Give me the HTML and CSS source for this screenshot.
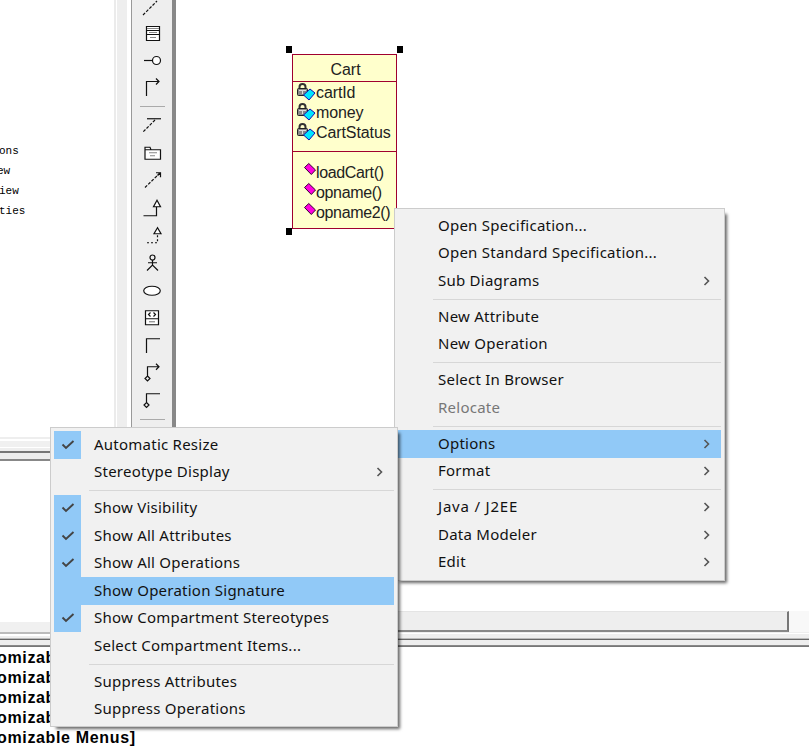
FILE: index.html
```html
<!DOCTYPE html>
<html lang="en">
<head>
    <meta charset="UTF-8">
    <meta name="viewport" content="width=device-width, initial-scale=1.0">
    <title>Class Diagram</title>
    <link rel="stylesheet" href="styles.css">
</head>
<body>
    <div class="workspace">
        <div class="left">
            <div class="tree">
                <div class="tree-item">ons</div>
                <div class="tree-item tree-item-view">ew</div>
                <div class="tree-item">iew</div>
                <div class="tree-item">ties</div>
            </div>
            <div class="splitter"></div>
            <div class="doc"></div>
            <div class="doc-edge"></div>
        </div>
        <div class="toolbar">
            <svg class="tool tool-small" viewBox="0 0 22 27"><path class="dash" d="M1 22L15 8"/></svg>
            <svg class="tool tool-small" viewBox="0 0 22 27"><path fill="#fff" d="M4.5 6.5h13v14h-13z"/><path d="M4 10.5h14M4 14.5h14"/><path class="soft" d="M5 8.500h12M7 12.500h8M8 17.500h6"/></svg>
            <svg class="tool tool-small" viewBox="0 0 22 27"><path d="M2 13.5h9"/><circle cx="14.5" cy="13.5" r="4" fill="#fff"/></svg>
            <svg class="tool tool-small" viewBox="0 0 22 27"><path d="M4.5 22V7.500H17M14 4.500l3 3-3 3"/></svg>
            <div class="tool-sep"></div>
            <svg class="tool" viewBox="0 0 22 27.500"><path d="M5 7.750h14"/><path class="dash" d="M13 9L1 21"/></svg>
            <svg class="tool" viewBox="0 0 22 27.500"><path fill="#fff" d="M3 20.250v-12h5l1 2.500h9.500v9.500zM3 10.750h6"/><path class="soft" d="M7 13.750h8M8 16.750h5"/></svg>
            <svg class="tool" viewBox="0 0 22 27.500"><path class="dash" d="M3 21.500L17 8"/><path d="M14 6.750h4.500v4.500M15.500 9.500l3-3"/></svg>
            <svg class="tool" viewBox="0 0 22 27.500"><path d="M1.500 21.750h13v-9"/><path fill="#fff" d="M15 6.250l-3.500 6.500h7z"/></svg>
            <svg class="tool" viewBox="0 0 22 27.500"><path class="dots" d="M5 21.750h10.500v-8"/><path fill="#fff" d="M15.500 6.750l-3.500 6h7z"/></svg>
            <svg class="tool" viewBox="0 0 22 27.500"><circle cx="10.500" cy="8.500" r="2.500"/><path d="M10.500 11v5M6 13.750h9M5 21.500l5.500-5.500 5.500 5.500"/></svg>
            <svg class="tool" viewBox="0 0 22 27.500"><ellipse cx="10" cy="14.750" rx="8.300" ry="4.500" fill="#fff"/></svg>
            <svg class="tool" viewBox="0 0 22 27.500"><path fill="#fff" d="M3.500 6.750h13v14h-13zM3 14.750h14"/><path d="M8.500 8.500l-2 2 2 2M11.500 8.500l2 2-2 2"/><path class="soft" d="M7 17.750h6"/></svg>
            <svg class="tool" viewBox="0 0 22 27.500"><path d="M4.500 22V7.750H18"/></svg>
            <svg class="tool" viewBox="0 0 22 27.500"><path d="M5.500 17V7.750H17M14 4.750l3 3-3 3M5.500 17l2.500 2.500-2.500 2.500-2.500-2.500z"/></svg>
            <svg class="tool" viewBox="0 0 22 27.500"><path d="M4.500 16.500V7.750H18M4.500 16.500L7 19l-2.500 2.500L2 19z"/></svg>
            <div class="tool-sep"></div>
        </div>
        <div class="diagram">
            <div class="canvas">
                <div class="class-box">
                    <div class="class-name">Cart</div>
                    <div class="attributes">
                        <div class="member"><svg class="icon" viewBox="0 0 20 20"><use href="#lock"/></svg>cartId</div>
                        <div class="member"><svg class="icon" viewBox="0 0 20 20"><use href="#lock"/></svg>money</div>
                        <div class="member"><svg class="icon" viewBox="0 0 20 20"><use href="#lock"/></svg>CartStatus</div>
                    </div>
                    <div class="operations">
                        <div class="member"><svg class="icon" viewBox="0 0 20 20"><use href="#op"/></svg>loadCart()</div>
                        <div class="member"><svg class="icon" viewBox="0 0 20 20"><use href="#op"/></svg>opname()</div>
                        <div class="member"><svg class="icon" viewBox="0 0 20 20"><use href="#op"/></svg>opname2()</div>
                    </div>
                </div>
                <i class="handle handle-tl"></i>
                <i class="handle handle-tr"></i>
                <i class="handle handle-bl"></i>
            </div>
            <div class="scrollbar"><div class="thumb"></div></div>
            <div class="diagram-edge"></div>
        </div>
    </div>
    <div class="frame"></div>
    <div class="log">
        <div>omizable Menus]</div>
        <div>omizable Menus]</div>
        <div>omizable Menus]</div>
        <div>omizable Menus]</div>
        <div>omizable Menus]</div>
    </div>

    <!-- context menu -->
    <div class="menu context-menu">
        <div class="item">Open Specification...</div>
        <div class="item">Open Standard Specification...</div>
        <div class="item">Sub Diagrams<svg class="arrow" viewBox="0 0 8 10"><use href="#arrow"/></svg></div>
        <div class="sep"></div>
        <div class="item">New Attribute</div>
        <div class="item">New Operation</div>
        <div class="sep"></div>
        <div class="item">Select In Browser</div>
        <div class="item disabled">Relocate</div>
        <div class="sep"></div>
        <div class="item active">Options<svg class="arrow" viewBox="0 0 8 10"><use href="#arrow"/></svg></div>
        <div class="item">Format<svg class="arrow" viewBox="0 0 8 10"><use href="#arrow"/></svg></div>
        <div class="sep"></div>
        <div class="item item-wide">Java / J2EE<svg class="arrow" viewBox="0 0 8 10"><use href="#arrow"/></svg></div>
        <div class="item">Data Modeler<svg class="arrow" viewBox="0 0 8 10"><use href="#arrow"/></svg></div>
        <div class="item">Edit<svg class="arrow" viewBox="0 0 8 10"><use href="#arrow"/></svg></div>
    </div>

    <!-- options submenu -->
    <div class="menu sub-menu">
        <div class="item"><span class="check"><svg viewBox="0 0 14 10"><use href="#check"/></svg></span>Automatic Resize</div>
        <div class="item">Stereotype Display<svg class="arrow" viewBox="0 0 8 10"><use href="#arrow"/></svg></div>
        <div class="sep"></div>
        <div class="item"><span class="check"><svg viewBox="0 0 14 10"><use href="#check"/></svg></span>Show Visibility</div>
        <div class="item"><span class="check"><svg viewBox="0 0 14 10"><use href="#check"/></svg></span>Show All Attributes</div>
        <div class="item"><span class="check"><svg viewBox="0 0 14 10"><use href="#check"/></svg></span>Show All Operations</div>
        <div class="item active">Show Operation Signature</div>
        <div class="item"><span class="check"><svg viewBox="0 0 14 10"><use href="#check"/></svg></span>Show Compartment Stereotypes</div>
        <div class="item">Select Compartment Items...</div>
        <div class="sep"></div>
        <div class="item">Suppress Attributes</div>
        <div class="item">Suppress Operations</div>
    </div>

    <svg class="defs">
        <defs>
            <g id="lock">
                <path d="M3.500 6V4q0-3 3-3t3 3v2" fill="none" stroke="#333" stroke-width="2"/>
                <rect x="1.500" y="5.500" width="10" height="7" rx="1" fill="#888" stroke="#222"/>
                <path d="M3 7.500h7M6.500 8v3" stroke="#ddd"/>
                <path d="M7.500 12L14 6l5 4-6 7z" fill="#00e5ff" stroke="#1010b0"/>
            </g>
            <g id="op">
                <path d="M8.500 4.500l4.300-4 6.700 6.500-4.200 4.500z" fill="#f0d" stroke="#303"/>
            </g>
            <path id="arrow" d="M1.500 1l4 4-4 4" fill="none" stroke="#555" stroke-width="1.600"/>
            <path id="check" d="M1.500 4.500l3.500 3.500 7.500-7" fill="none" stroke="#444" stroke-width="1.900"/>
        </defs>
    </svg>
</body>
</html>
```
FILE: styles.css
```css
body {
    margin: 0;
    height: 755px;
    overflow: hidden;
    display: flex;
    flex-direction: column;
    position: relative;
    background: #fff;
    color: #000;
    font-family: "Liberation Sans", Arial, sans-serif;
}
.workspace {
    display: flex;
    height: 638px;
    overflow: hidden;
}
.left {
    width: 131px;
    display: flex;
    flex-direction: column;
}
.tree {
    box-sizing: border-box;
    width: 127px;
    height: 437px;
    padding-top: 141px;
    border-right: 10px solid #eee;
    box-shadow: inset -1px 0 #fff, inset -3px 0 #ebebeb;
    font: 11px/20px "Liberation Mono", monospace;
    overflow: hidden;
}
.tree-item {
    margin-left: -1px;
    height: 20px;
}
.tree-item-view {
    margin-left: -3px;
}
.splitter {
    height: 24px;
    background: linear-gradient(#eee 0 2px, #fff 2px 4px, #f0f0f0 4px 10px, #fff 10px 11px, #eee 11px 14px, #777 14px 16px, #eee 16px 22px, #888 22px 24px);
}
.doc {
    flex: 1;
}
.doc-edge {
    height: 16px;
    background: linear-gradient(#f0f0f0 0 10px, #bbb 10px 12px, #fff 12px 14px, #eee 14px);
}
.toolbar {
    box-sizing: border-box;
    width: 45px;
    height: 437px;
    padding-left: 10px;
    background: #eee;
    border-left: 1px solid #999;
    border-right: 4px solid #888;
    overflow: hidden;
}
.tool {
    display: block;
    width: 22px;
    height: 27.5px;
    fill: none;
    stroke: #111;
    stroke-width: 1.2;
}
.tool-small {
    height: 27px;
}
.tool-small:first-child {
    margin-top: -7px;
}
.dash {
    stroke-dasharray: 3 1.5;
}
.dots {
    stroke-dasharray: 2 2;
}
.soft {
    stroke: #888;
}
.tool-sep {
    width: 25px;
    height: 5px;
    margin-left: -2px;
    padding-top: 5px;
    background: linear-gradient(transparent 5px, #aaa 5px 6px, transparent 6px);
}
.diagram {
    flex: 1;
    display: flex;
    flex-direction: column;
}
.canvas {
    flex: 1;
    position: relative;
}
.class-box {
    position: absolute;
    left: 116px;
    top: 54px;
    box-sizing: border-box;
    width: 105px;
    height: 175px;
    background: #ffffcc;
    border: 1px solid #a0002e;
    font-size: 16px;
    line-height: 20px;
    color: #222;
}
.class-name {
    height: 26px;
    line-height: 29px;
    text-align: center;
    text-indent: 2px;
    border-bottom: 1px solid #a0002e;
}
.attributes {
    height: 70px;
    padding-top: 1px;
    box-sizing: border-box;
    border-bottom: 1px solid #a0002e;
    letter-spacing: -0.1px;
}
.operations {
    padding-top: 11px;
    letter-spacing: -0.35px;
}
.member {
    display: flex;
    height: 20px;
    padding-left: 3px;
    white-space: nowrap;
}
.icon {
    width: 20px;
    height: 20px;
    flex: none;
    overflow: visible;
}
.handle {
    position: absolute;
    width: 6px;
    height: 7px;
    background: #000;
}
.handle-tl {
    left: 110px;
    top: 46px;
}
.handle-tr {
    left: 221px;
    top: 46px;
}
.handle-bl {
    left: 110px;
    top: 228px;
}
.scrollbar {
    height: 21px;
    background: #f8f8f8;
}
.thumb {
    box-sizing: border-box;
    width: 613px;
    height: 21px;
    background: #eee;
    border-top: 1px solid #e4e4e4;
    border-right: 2px solid #777;
    border-bottom: 2px solid #888;
}
.diagram-edge {
    height: 6px;
    background: linear-gradient(#eee 0 1px, #fff 1px 2px, #eee 2px);
}
.frame {
    height: 10px;
    background: linear-gradient(#bbb 0 1px, #666 1px 2px, #eee 2px 7px, #888 7px 8px, #777 8px 9px, #fff 9px);
}
.log {
    flex: 1;
    margin-left: -3px;
    font-size: 16px;
    font-weight: bold;
    line-height: 20px;
    letter-spacing: 0.65px;
}
.menu {
    position: absolute;
    box-sizing: border-box;
    padding: 3px;
    background: #f1f1f1;
    border: 1px solid #ccc;
    box-shadow: 4px 4px 3px -2px rgba(0,0,0,0.6);
    font-family: "Noto Sans", sans-serif;
    font-size: 15px;
    letter-spacing: 0.24px;
    color: #111;
}
.context-menu {
    left: 394px;
    top: 208px;
    width: 331px;
    height: 373px;
}
.sub-menu {
    left: 50px;
    top: 427px;
    width: 348px;
    height: 300px;
}
.item {
    display: flex;
    align-items: center;
    height: 27.5px;
    padding-left: 40px;
    line-height: 25px;
    white-space: nowrap;
    box-sizing: border-box;
    padding-bottom: 1px;
}
.item-wide {
    letter-spacing: 0.8px;
}
.sep {
    height: 8.5px;
    margin-left: 35px;
    background: linear-gradient(transparent 4px, #d7d7d7 4px 5px, transparent 5px);
}
.active {
    background: #91c9f7;
}
.disabled {
    color: #777;
}
.arrow {
    width: 8px;
    height: 10px;
    margin: 1px 10px 0 auto;
}
.check {
    display: flex;
    align-items: center;
    justify-content: center;
    width: 27px;
    height: 27.5px;
    margin: 0 13px -1px -40px;
    background: #91c9f7;
}
.check svg {
    width: 14px;
    height: 10px;
}
.defs {
    position: absolute;
    width: 0;
    height: 0;
}
```
